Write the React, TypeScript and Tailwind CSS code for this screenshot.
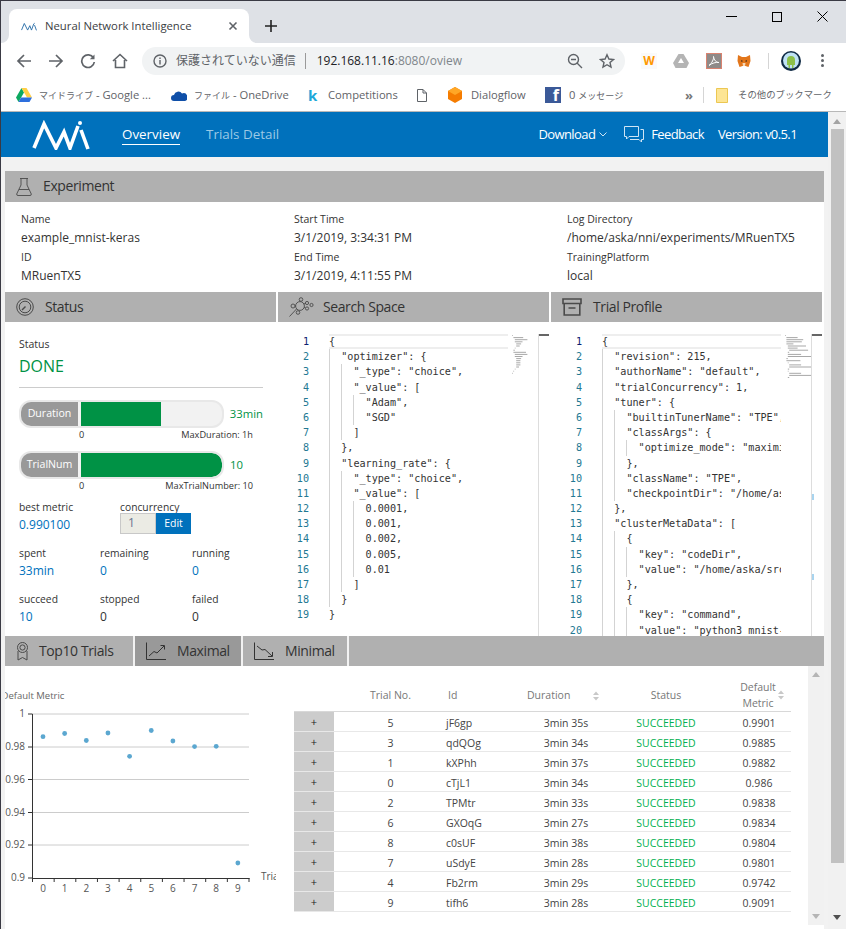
import React from "react";

const UI = "font-['Open_Sans','Noto_Sans_CJK_JP',sans-serif]";

const searchLines = [
  '{',
  '  "optimizer": {',
  '    "_type": "choice",',
  '    "_value": [',
  '      "Adam",',
  '      "SGD"',
  '    ]',
  '  },',
  '  "learning_rate": {',
  '    "_type": "choice",',
  '    "_value": [',
  '      0.0001,',
  '      0.001,',
  '      0.002,',
  '      0.005,',
  '      0.01',
  '    ]',
  '  }',
  '}',
];

const profileLines = [
  '{',
  '  "revision": 215,',
  '  "authorName": "default",',
  '  "trialConcurrency": 1,',
  '  "tuner": {',
  '    "builtinTunerName": "TPE",',
  '    "classArgs": {',
  '      "optimize_mode": "maximize"',
  '    },',
  '    "className": "TPE",',
  '    "checkpointDir": "/home/aska/nni/experiments/MRuenTX5/checkpoint"',
  '  },',
  '  "clusterMetaData": [',
  '    {',
  '      "key": "codeDir",',
  '      "value": "/home/aska/src/nni/examples/trials/mnist-keras"',
  '    },',
  '    {',
  '      "key": "command",',
  '      "value": "python3 mnist-keras.py"',
  '    },',
];

const trials = [
  ["5", "jF6gp", "3min 35s", "0.9901"],
  ["3", "qdQOg", "3min 34s", "0.9885"],
  ["1", "kXPhh", "3min 37s", "0.9882"],
  ["0", "cTjL1", "3min 34s", "0.986"],
  ["2", "TPMtr", "3min 33s", "0.9838"],
  ["6", "GXOqG", "3min 27s", "0.9834"],
  ["8", "c0sUF", "3min 38s", "0.9804"],
  ["7", "uSdyE", "3min 28s", "0.9801"],
  ["4", "Fb2rm", "3min 29s", "0.9742"],
  ["9", "tifh6", "3min 28s", "0.9091"],
];

function Logo({ className, color = "#fff", width = 3.6 }: { className?: string; color?: string; width?: number }) {
  return (
    <svg viewBox="0 0 58 30" className={className} fill="none">
      <polyline points="2,28 12,4 24,28 32,12 38,28 46,6" stroke={color} strokeWidth={width} />
      <line x1="49" y1="10" x2="56" y2="29" stroke={color} strokeWidth={width} />
      <circle cx="48" cy="3" r="2" fill={color} />
    </svg>
  );
}

function Minimap({ lines }: { lines: string[] }) {
  return (
    <svg width="28" height="60" viewBox="0 0 28 60" className="block">
      {lines.map((l, i) => {
        const indent = l.length - l.trimStart().length;
        return (
          <rect
            key={i}
            x={2 + indent * 0.7}
            y={1 + i * 2.1}
            width={Math.min(l.trim().length * 0.7, 26)}
            height="1"
            fill="#a8a8a8"
          />
        );
      })}
    </svg>
  );
}

function Editor({ lines, codeW, marks }: { lines: string[]; codeW: string; marks?: boolean }) {
  return (
    <div className="flex h-[314px] overflow-hidden bg-white pt-3 font-['DejaVu_Sans_Mono',monospace] text-[10.15px] leading-[15.2px] text-[#333]">
      <div className="w-[31px] shrink-0 text-right text-[#237893]">
        {lines.map((_, i) => (
          <div key={i} className={i === 0 ? "h-[15.2px] text-[#0b216f]" : "h-[15.2px]"}>
            {i + 1}
          </div>
        ))}
      </div>
      <div className={`ml-[20px] shrink-0 overflow-hidden ${codeW}`}>
        {lines.map((l, i) => {
          const indent = (l.length - l.trimStart().length) / 2;
          return (
            <div
              key={i}
              className={
                i === 0
                  ? "flex h-[15.2px] items-center whitespace-pre border-y-2 border-[#eeeeee]"
                  : "flex h-[15.2px] whitespace-pre"
              }
            >
              {Array.from({ length: indent }).map((_, k) => (
                <span key={k} className="h-full w-[12.2px] shrink-0 border-l border-[#d3d3d3]" />
              ))}
              <span>{l.trimStart()}</span>
            </div>
          );
        })}
      </div>
      <div className="ml-[2px] w-[28px] shrink-0">
        <Minimap lines={lines} />
      </div>
      <div className="flex w-[11px] shrink-0 flex-col border-l border-[#dddddd]">
        <div className="h-[2px] w-full bg-[#666666]" />
        {marks && (
          <div className="mt-[158px] flex w-[2px] flex-col gap-[74px]">
            <div className="h-[6px] bg-[#a8d4ef]" />
            <div className="h-[6px] bg-[#a8d4ef]" />
          </div>
        )}
      </div>
    </div>
  );
}

function Bar({ label, fill, value, right }: { label: string; fill: string; value: string; right: string }) {
  return (
    <div className="w-[244px]">
      <div className="flex items-center">
        <div className="flex h-[28px] w-[205px] overflow-hidden rounded-[12px] border-2 border-[#e8e8e8] bg-[#f2f2f2]">
          <div className="flex w-[57px] shrink-0 items-center justify-center bg-[#999999] text-[10.6px] text-white">
            {label}
          </div>
          <div className={`ml-[3px] bg-[#009245] ${fill}`} />
        </div>
        <div className="ml-[6px] text-[11.3px] text-[#009245]">{value}</div>
      </div>
      <div className="mt-[1px] flex justify-between pl-[60px] pr-[10px] text-[9.2px] leading-[12px] text-[#333]">
        <span>0</span>
        <span>{right}</span>
      </div>
    </div>
  );
}

function Stat({ label, value, w, dark }: { label: string; value: string; w: string; dark?: boolean }) {
  return (
    <div className={w}>
      <div className="h-[18px] text-[10.3px] leading-[18px] text-[#333]">{label}</div>
      <div className={`h-[18px] text-[12px] leading-[18px] ${dark ? "text-[#333]" : "text-[#0071bc]"}`}>{value}</div>
    </div>
  );
}

function Info({ label, value }: { label: string; value: string }) {
  return (
    <div>
      <div className="h-[19px] text-[10.5px] leading-[19px] text-[#333]">{label}</div>
      <div className="h-[19px] whitespace-nowrap text-[12px] leading-[17px] text-[#333]">{value}</div>
    </div>
  );
}

function Chart() {
  const ys = [
    ["1", 714],
    ["0.98", 747],
    ["0.96", 779.5],
    ["0.94", 812.5],
    ["0.92", 845],
    ["0.9", 878],
  ] as const;
  const pts = [736.7, 733.5, 740.5, 733, 756.3, 730.5, 741, 746.6, 746.3, 863];
  return (
    <svg width="271" height="263" viewBox="5 666 271 263" className="block" fontFamily="Open Sans, sans-serif">
      <text x="1.5" y="699" fontSize="9.5" fill="#666">Default Metric</text>
      {ys.map(([l, y]) => (
        <g key={l}>
          <line x1="28" x2="32.5" y1={y} y2={y} stroke="#333" />
          {y !== 878 && <line x1="32.5" x2="249" y1={y} y2={y} stroke="#ccc" />}
          <text x="25" y={y + 3} fontSize="10" fill="#555" textAnchor="end">{l}</text>
        </g>
      ))}
      <line x1="32.5" x2="32.5" y1="714" y2="878" stroke="#333" />
      <line x1="32.5" x2="249.5" y1="878.5" y2="878.5" stroke="#333" />
      {Array.from({ length: 11 }).map((_, i) => (
        <line key={i} x1={32.5 + i * 21.65} x2={32.5 + i * 21.65} y1="878" y2="882" stroke="#333" />
      ))}
      {pts.map((y, i) => (
        <g key={i}>
          <circle cx={43 + i * 21.65} cy={y} r="2.4" fill="#5ba7d0" />
          <text x={43 + i * 21.65} y="892" fontSize="10" fill="#555" textAnchor="middle">{i}</text>
        </g>
      ))}
      <text x="261" y="880" fontSize="10" fill="#555">Trial No.</text>
    </svg>
  );
}

function Sorter({ className = "" }: { className?: string }) {
  return (
    <svg width="8" height="10" viewBox="0 0 8 10" className={className}>
      <path d="M4 0.5 L7 4 H1 Z M4 9.5 L7 6 H1 Z" fill="#c8c8c8" />
    </svg>
  );
}

function TrialTable() {
  const cols = "grid grid-cols-[40px_113px_80px_78px_122px_64px]";
  const cell = "h-[19px] leading-[22px]";
  return (
    <div className="mt-[13px] w-[497px] text-[10.5px] text-[#444]">
      <div className={`${cols} h-[33px] items-center border-b border-[#d8d8d8] text-[#777]`}>
        <div />
        <div className="mt-[2px] text-center">Trial No.</div>
        <div className="mt-[2px] pl-[1px]">Id</div>
        <div className="mt-[2px] flex items-center">
          <span className="w-[43px] text-center">Duration</span>
          <Sorter className="ml-[22px]" />
        </div>
        <div className="mt-[2px] text-center">Status</div>
        <div className="flex items-center">
          <span className="w-[62px] shrink-0 text-center leading-[16px]">
            Default
            <br />
            Metric
          </span>
          <Sorter className="-ml-[12px] shrink-0" />
        </div>
      </div>
      {trials.map((t) => (
        <div key={t[0]} className={`${cols} h-[20px] items-start border-b border-[#e8e8e8]`}>
          <div className="flex h-[19px] items-center justify-center bg-[#cccccc] pt-[2px] text-[11px] text-[#222]">+</div>
          <div className={`${cell} text-center`}>{t[0]}</div>
          <div className={`${cell} -ml-[1px]`}>{t[1]}</div>
          <div className={`${cell} text-center`}>{t[2]}</div>
          <div className={`${cell} text-center text-[#00b050]`}>SUCCEEDED</div>
          <div className={`${cell} text-center`}>{t[3]}</div>
        </div>
      ))}
    </div>
  );
}

const headText = "mb-[2px] text-[14px] font-medium tracking-[-0.4px] text-[#333]";

export default function App() {
  return (
    <div className={`flex h-[929px] w-[846px] flex-col overflow-hidden border-l border-t border-[#3a3a44] bg-white ${UI}`}>
      {/* Tab strip */}
      <div className="flex h-[42px] shrink-0 items-end bg-[#dee1e6]">
        <svg width="8" height="8" viewBox="0 0 8 8" className="block shrink-0">
          <path d="M8 0 V8 H0 A8 8 0 0 0 8 0 Z" fill="#fff" />
        </svg>
        <div className="flex h-[34px] w-[240px] shrink-0 items-center rounded-t-[8px] bg-white pl-[12px] pr-[10px]">
          <Logo className="h-[15px] w-[16px]" color="#2a6ea8" width={3.4} />
          <span className="ml-[8px] text-[11.3px] text-[#3c4043]">Neural Network Intelligence</span>
          <svg width="10" height="10" viewBox="0 0 10 10" className="ml-auto mr-[1px]">
            <path d="M1.5 1.5 L8.5 8.5 M8.5 1.5 L1.5 8.5" stroke="#5f6368" strokeWidth="1.6" />
          </svg>
        </div>
        <svg width="8" height="8" viewBox="0 0 8 8" className="block shrink-0">
          <path d="M0 0 V8 H8 A8 8 0 0 1 0 0 Z" fill="#fff" />
        </svg>
        <svg width="12" height="12" viewBox="0 0 12 12" className="mb-[11px] ml-[8px]">
          <path d="M6 0 V12 M0 6 H12" stroke="#222" strokeWidth="1.6" />
        </svg>
        <div className="mb-[21px] ml-auto flex items-center self-end">
          <div className="h-[1px] w-[11px] bg-black" />
          <div className="ml-[35px] h-[10px] w-[10px] border border-black" />
          <svg width="11" height="11" viewBox="0 0 11 11" className="ml-[35px] mr-[18px]">
            <path d="M0.5 0.5 L10.5 10.5 M10.5 0.5 L0.5 10.5" stroke="#000" />
          </svg>
        </div>
      </div>

      {/* Toolbar */}
      <div className="flex h-[36px] shrink-0 items-center bg-white pb-[1px] pl-[15px]">
        <svg width="16" height="16" viewBox="0 0 16 16" fill="none" stroke="#5f6368" strokeWidth="1.7">
          <path d="M15 8 H2 M8 2 L2 8 L8 14" />
        </svg>
        <svg width="16" height="16" viewBox="0 0 16 16" fill="none" stroke="#5f6368" strokeWidth="1.7" className="ml-[16px]">
          <path d="M1 8 H14 M8 2 L14 8 L8 14" />
        </svg>
        <svg width="16" height="16" viewBox="0 0 16 16" fill="none" stroke="#5f6368" strokeWidth="1.7" className="ml-[16px]">
          <path d="M13.5 5 A6.3 6.3 0 1 0 14.3 9" />
          <path d="M14.5 1.5 V6.2 H9.8 Z" fill="#5f6368" stroke="none" />
        </svg>
        <svg width="16" height="16" viewBox="0 0 16 16" fill="none" stroke="#5f6368" strokeWidth="1.6" className="ml-[16px]">
          <path d="M1 8 L8 1.5 L15 8 M3.5 7 V14.5 H12.5 V7" />
        </svg>
        <div className="ml-[14px] flex h-[28px] w-[483px] items-center rounded-full bg-[#f1f3f4] pl-[11px] pr-[10px] text-[12px]">
          <svg width="14" height="14" viewBox="0 0 14 14" fill="none" stroke="#5f6368" strokeWidth="1.4">
            <circle cx="7" cy="7" r="6" />
            <path d="M7 6 V10.5 M7 3.5 V5" />
          </svg>
          <span className="ml-[9px] whitespace-nowrap text-[12px] text-[#5f6368]">保護されていない通信</span>
          <span className="ml-[9px] h-[16px] w-[1px] bg-[#9a9a9a]" />
          <span className="ml-[11px] text-[12px] text-[#202124]">
            192.168.11.16<span className="text-[#80868b]">:8080/oview</span>
          </span>
          <svg width="16" height="16" viewBox="0 0 16 16" fill="none" stroke="#5f6368" strokeWidth="1.4" className="ml-auto">
            <circle cx="6.5" cy="6.5" r="5" />
            <path d="M4 6.5 H9 M10 10 L15 15" />
          </svg>
          <svg width="16" height="16" viewBox="0 0 16 16" fill="none" stroke="#5f6368" strokeWidth="1.4" className="ml-[16px]">
            <path d="M8 1.8 L9.9 6 L14.5 6.5 L11 9.5 L12 14 L8 11.7 L4 14 L5 9.5 L1.5 6.5 L6.1 6 Z" />
          </svg>
        </div>
        <div className="ml-[16px] flex h-[16px] w-[16px] items-center justify-center bg-[#fafafa] text-[12px] font-bold text-[#ff9800]">W</div>
        <svg width="16" height="14" viewBox="0 0 16 14" className="ml-[16px]">
          <path d="M5.5 0 H10.5 L16 9 L13.5 14 H2.5 L0 9 Z" fill="#b4b4b4" />
          <path d="M8 4 L11 9 H5 Z" fill="#fff" />
        </svg>
        <div className="ml-[17px] flex h-[16px] w-[16px] items-center justify-center border border-[#d9826f] bg-[#8f8a88]">
          <svg width="12" height="12" viewBox="0 0 12 12" fill="none" stroke="#fff" strokeWidth="1">
            <path d="M1 10.5 C4 8 6 4 5.5 1.5 C6 5 8 7.5 11 7.5 C8 7 4 8 1 10.5 Z" />
          </svg>
        </div>
        <svg width="14" height="14" viewBox="0 0 14 14" className="ml-[15px]">
          <path d="M1 1 L5 3 H9 L13 1 L13.5 7 L11.5 13 L8.5 12 H5.5 L2.5 13 L0.5 7 Z" fill="#e2761b" />
          <path d="M4 6 L6 7 L4.5 8 Z M10 6 L8 7 L9.5 8 Z" fill="#3a2a1a" />
          <path d="M5.5 9 H8.5 L8 12 H6 Z" fill="#f5d7b5" />
        </svg>
        <div className="ml-[17px] h-[16px] w-[1px] bg-[#d5d5d5]" />
        <svg width="20" height="20" viewBox="0 0 20 20" className="ml-[12px]">
          <circle cx="10" cy="10" r="10" fill="#0f2a44" />
          <circle cx="10" cy="9.5" r="8" fill="#bfe2f5" />
          <path d="M6 9 A4 4 0 0 1 14 9 V14 H12.5 V17 H11 V14 H9 V17 H7.5 V14 H6 Z" fill="#8cc04a" />
        </svg>
        <div className="ml-[20px] flex flex-col gap-[2px]">
          <div className="h-[3px] w-[3px] rounded-full bg-[#5f6368]" />
          <div className="h-[3px] w-[3px] rounded-full bg-[#5f6368]" />
          <div className="h-[3px] w-[3px] rounded-full bg-[#5f6368]" />
        </div>
      </div>

      {/* Bookmarks */}
      <div className="flex h-[33px] shrink-0 items-center whitespace-nowrap border-b border-[#b8b8b8] bg-white pl-[15px] text-[11.2px] text-[#5f6368]">
        <svg width="16" height="14" viewBox="0 0 16 14">
          <path d="M5.5 0 L0 9.5 L2.5 14 L8 4.5 Z" fill="#0da960" />
          <path d="M5.5 0 H10.5 L16 9.5 H11 Z" fill="#ffcf47" />
          <path d="M2.5 14 H13.5 L16 9.5 H5 Z" fill="#2d6fdd" />
        </svg>
        <span className="ml-[7px] w-[115px]">
          <span className="text-[9px]">マイドライブ</span> - Google ...
        </span>
        <svg width="16" height="11" viewBox="0 0 16 11" className="ml-[17px]">
          <path d="M3 11 A3 3 0 0 1 3 5 A4.5 4.5 0 0 1 11 3.5 A3.5 3.5 0 0 1 14 11 Z" fill="#0f4fa8" />
        </svg>
        <span className="ml-[7px] w-[96px]">
          <span className="text-[9px]">ファイル</span> - OneDrive
        </span>
        <span className="ml-[18px] w-[9px] text-[15px] font-bold leading-none text-[#20a7d8]">k</span>
        <span className="ml-[11px] w-[71px]">Competitions</span>
        <svg width="10" height="13" viewBox="0 0 10 13" fill="none" stroke="#5f6368" className="ml-[18px]">
          <path d="M0.5 0.5 H6 L9.5 4 V12.5 H0.5 Z M6 0.5 V4 H9.5" />
        </svg>
        <svg width="14" height="16" viewBox="0 0 14 16" className="ml-[21px]">
          <path d="M7 0 L14 4 V12 L7 16 L0 12 V4 Z" fill="#f57c00" />
          <path d="M7 0 L14 4 L7 8 L0 4 Z" fill="#ffa726" />
        </svg>
        <span className="ml-[9px] w-[57px]">Dialogflow</span>
        <div className="ml-[17px] flex h-[16px] w-[16px] items-end justify-end overflow-hidden bg-[#3b5998] pr-[2px] text-[16px] font-bold leading-[16px] text-white">f</div>
        <span className="ml-[8px] w-[53px]">
          0 <span className="text-[9px]">メッセージ</span>
        </span>
        <span className="ml-[63px] text-[13px] font-bold leading-none text-[#777]">»</span>
        <div className="ml-[10px] h-[16px] w-[1px] bg-[#d5d5d5]" />
        <svg width="12" height="15" viewBox="0 0 12 15" className="ml-[12px]">
          <path d="M0.5 0.5 H11.5 V14.5 H0.5 Z" fill="#fde594" stroke="#ecc752" />
        </svg>
        <span className="ml-[10px] text-[9.4px]">その他のブックマーク</span>
      </div>

      {/* Page */}
      <div className="flex min-h-0 flex-1">
        <div className="w-[827px] shrink-0 bg-[#f2f2f2]">
          {/* Nav */}
          <div className="flex h-[45px] items-center bg-[#0071bc] text-[13px] text-white">
            <Logo className="ml-[31px] h-[30px] w-[58px]" />
            <span className="ml-[32px] border-b border-white text-[13.4px] leading-[19px]">Overview</span>
            <span className="ml-[26px] text-[13.4px] text-[#9cc9e6]">Trials Detail</span>
            <span className="ml-auto tracking-[-0.6px]">Download</span>
            <svg width="8" height="5" viewBox="0 0 8 5" fill="none" stroke="#cfe5f5" className="ml-[4px]">
              <path d="M0.5 0.5 L4 4 L7.5 0.5" />
            </svg>
            <svg width="20" height="17" viewBox="0 0 20 17" fill="none" stroke="#cfe5f5" className="ml-[17px]">
              <path d="M0.5 0.5 H14.5 V10.5 H5 L2.5 13 V10.5 H0.5 Z" />
              <path d="M16.5 3.5 H19.5 V13.5 H17.5 V16 L15 13.5 H6" />
            </svg>
            <span className="ml-[7px] tracking-[-0.6px]">Feedback</span>
            <span className="ml-[14px] mr-[31px] tracking-[-0.6px]">Version: v0.5.1</span>
          </div>

          <div className="pl-[4px] pt-[14px]">
            {/* Experiment */}
            <div className="w-[819px]">
              <div className="flex h-[31px] items-center bg-[#b0b0b0] pl-[11px]">
                <svg width="16" height="18" viewBox="0 0 16 18" fill="none" stroke="#4a4a4a" strokeWidth="0.9">
                  <path d="M5 0.5 V7 L0.7 16 Q0.5 17.5 2 17.5 H14 Q15.5 17.5 15.3 16 L11 7 V0.5 M4 0.5 H12 M3 11.5 H13" />
                </svg>
                <span className={`ml-[11px] ${headText}`}>Experiment</span>
              </div>
              <div className="flex h-[90px] bg-white pl-[16px] pt-[8px]">
                <div className="w-[273px]">
                  <Info label="Name" value="example_mnist-keras" />
                  <Info label="ID" value="MRuenTX5" />
                </div>
                <div className="w-[273px]">
                  <Info label="Start Time" value="3/1/2019, 3:34:31 PM" />
                  <Info label="End Time" value="3/1/2019, 4:11:55 PM" />
                </div>
                <div>
                  <Info label="Log Directory" value="/home/aska/nni/experiments/MRuenTX5" />
                  <Info label="TrainingPlatform" value="local" />
                </div>
              </div>
            </div>

            {/* Three panels */}
            <div className="flex w-[819px] gap-[2px] bg-white">
              <div className="w-[271px]">
                <div className="flex h-[30px] items-center bg-[#b0b0b0] pl-[11px]">
                  <svg width="18" height="18" viewBox="0 0 18 18" fill="none" stroke="#4a4a4a">
                    <circle cx="9" cy="9" r="8.3" />
                    <circle cx="9" cy="9" r="5.8" />
                    <path d="M6 12 L9.5 8.5" strokeWidth="1.4" />
                  </svg>
                  <span className={`ml-[11px] ${headText}`}>Status</span>
                </div>
                <div className="h-[314px] bg-white pl-[14px] pt-[13px]">
                  <div className="text-[10.5px] leading-[18px] text-[#333]">Status</div>
                  <div className="text-[16px] font-medium leading-[26px] text-[#009245]">DONE</div>
                  <div className="mt-[8px] h-[1px] w-[244px] bg-[#cccccc]" />
                  <div className="mt-[12px]">
                    <Bar label="Duration" fill="w-[80px]" value="33min" right="MaxDuration: 1h" />
                  </div>
                  <div className="mt-[10px]">
                    <Bar label="TrialNum" fill="flex-1 rounded-r-[10px]" value="10" right="MaxTrialNumber: 10" />
                  </div>
                  <div className="mt-[6px] flex h-[36px]">
                    <Stat label="best metric" value="0.990100" w="w-[101px]" />
                    <div>
                      <div className="h-[15px] text-[10.3px] leading-[18px] text-[#333]">concurrency</div>
                      <div className="flex h-[21px]">
                        <div className="h-[21px] w-[36px] border border-[#c8c8c8] bg-[#ebebe4] pl-[7px] text-[12px] leading-[18px] text-[#6a7590]">1</div>
                        <div className="flex h-[21px] w-[35px] items-center justify-center bg-[#0071bc] text-[10.5px] text-white">Edit</div>
                      </div>
                    </div>
                  </div>
                  <div className="mt-[10px] flex">
                    <Stat label="spent" value="33min" w="w-[81px]" />
                    <Stat label="remaining" value="0" w="w-[92px]" />
                    <Stat label="running" value="0" w="w-[80px]" />
                  </div>
                  <div className="mt-[10px] flex">
                    <Stat label="succeed" value="10" w="w-[81px]" />
                    <Stat label="stopped" value="0" w="w-[92px]" dark />
                    <Stat label="failed" value="0" w="w-[80px]" dark />
                  </div>
                </div>
              </div>

              <div className="w-[271px]">
                <div className="flex h-[30px] items-center bg-[#b0b0b0] pl-[11px]">
                  <svg width="25" height="20" viewBox="0 0 25 20" fill="none" stroke="#4a4a4a" strokeWidth="0.9">
                    <circle cx="11" cy="9" r="4.4" />
                    <circle cx="12" cy="2.5" r="1.8" />
                    <circle cx="4" cy="9" r="2" />
                    <circle cx="9" cy="15.5" r="1.8" />
                    <circle cx="18" cy="6" r="1.6" />
                    <circle cx="22.5" cy="8" r="1.6" />
                    <circle cx="18" cy="11.5" r="1.6" />
                    <path d="M0.5 19.5 L7.5 12 M6 9 H7 M14.5 7 L16.5 6.5 M15 10 L16.5 11" />
                  </svg>
                  <span className={`ml-[9px] ${headText}`}>Search Space</span>
                </div>
                <Editor lines={searchLines} codeW="w-[179px]" />
              </div>

              <div className="w-[271px]">
                <div className="flex h-[30px] items-center bg-[#b0b0b0] pl-[11px]">
                  <svg width="20" height="18" viewBox="0 0 20 18" fill="none" stroke="#4a4a4a" strokeWidth="1.6">
                    <path d="M1 1 H19 V5.5 H1 Z M2.2 5.5 V17 H17.8 V5.5 M6.5 10 H13.5" />
                  </svg>
                  <span className={`ml-[11px] ${headText}`}>Trial Profile</span>
                </div>
                <Editor lines={profileLines} codeW="w-[179px]" marks />
              </div>
            </div>

            {/* Tabs */}
            <div className="flex h-[30px] w-[819px] gap-[2px]">
              <div className="flex w-[128px] items-center bg-[#b0b0b0] pl-[11px]">
                <svg width="13" height="19" viewBox="0 0 13 19" fill="none" stroke="#4a4a4a">
                  <circle cx="6.5" cy="5.5" r="5" />
                  <circle cx="6.5" cy="5.5" r="2.6" />
                  <path d="M2 9 V18 L6.5 15.5 L11 18 V9" />
                </svg>
                <span className={`ml-[10px] ${headText}`}>Top10 Trials</span>
              </div>
              <div className="flex w-[106px] items-center bg-[#999999] pl-[11px]">
                <svg width="20" height="18" viewBox="0 0 20 18" fill="none" stroke="#333">
                  <path d="M0.5 0.5 V17.5 H20 M3 14 L8 9.5 L11 11 L18 4 M14.5 3.5 H18.5 V7.5" />
                </svg>
                <span className={`ml-[11px] ${headText}`}>Maximal</span>
              </div>
              <div className="flex w-[104px] items-center bg-[#b0b0b0] pl-[11px]">
                <svg width="20" height="18" viewBox="0 0 20 18" fill="none" stroke="#333">
                  <path d="M0.5 0.5 V17.5 H20 M3 4 L8 8 L11 7.5 L18 14 M14 14.5 H18.5 V10" />
                </svg>
                <span className={`ml-[11px] ${headText}`}>Minimal</span>
              </div>
              <div className="flex-1 bg-[#b0b0b0]" />
            </div>

            {/* Bottom */}
            <div className="flex h-[263px] w-[819px] bg-white">
              <div className="w-[271px] shrink-0 overflow-hidden">
                <Chart />
              </div>
              <div className="ml-[18px] w-[497px]">
                <TrialTable />
              </div>
              <div className="ml-[17px] flex h-[259px] w-[16px] flex-col items-center justify-between bg-[#f1f1f1] py-[6px]">
                <div className="h-0 w-0 border-x-[4px] border-b-[5px] border-x-transparent border-b-[#b5b5b5]" />
                <div className="h-0 w-0 border-x-[4px] border-t-[5px] border-x-transparent border-t-[#b5b5b5]" />
              </div>
            </div>
          </div>
        </div>

        {/* Page scrollbar */}
        <div className="flex w-[18px] flex-col items-center bg-[#f1f1f1]">
          <div className="mt-[7px] h-0 w-0 border-x-[4px] border-b-[5px] border-x-transparent border-b-[#a3a3a3]" />
          <div className="mt-[5px] h-[734px] w-[13px] bg-[#c1c1c1]" />
          <div className="mb-[9px] mt-auto h-0 w-0 border-x-[4px] border-t-[5px] border-x-transparent border-t-[#505050]" />
        </div>
      </div>
    </div>
  );
}
